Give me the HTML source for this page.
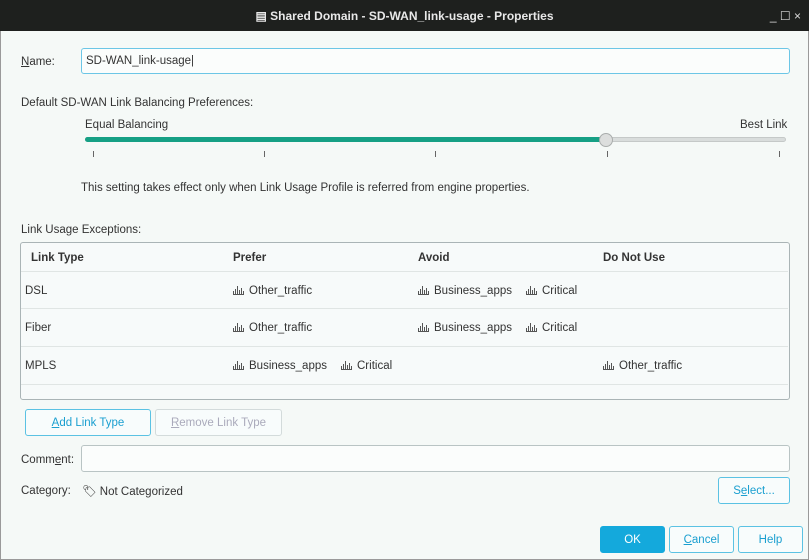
<!DOCTYPE html>
<html><head><style>
*{box-sizing:border-box;margin:0;padding:0}
body{width:809px;height:560px;background:#f5f9f7;font-family:"Liberation Sans",sans-serif;font-size:11.5px;color:#333;position:relative;overflow:hidden}
.a{position:absolute;white-space:nowrap}
.tb{left:0;top:0;width:809px;height:31px;background:#1e201e;color:#e8e8e8;font-weight:bold;font-size:12px;text-align:center;line-height:32px}
.frame{left:0;top:31px;width:809px;height:529px;border:1px solid #9a9a9a;border-top:none}
.inp{background:#fbfdfc;border:1px solid #b9c4c4;border-radius:3px}
.btn{border:1px solid #5bc2e3;border-radius:3px;color:#1a9fd0;text-align:center;background:#f8fcfc}
.hd{font-weight:bold;color:#333}
.sep{left:21px;width:767px;height:1px;background:#e0e5e4}
.ic{display:inline-block;width:11px;height:10px;margin-right:5px;vertical-align:-1px}
.g{display:inline-block;width:14px}
</style></head><body>
<div class="a tb">▤ Shared Domain - SD-WAN_link-usage - Properties</div>
<div class="a" style="right:8px;top:9px;color:#ddd;font-size:12px">_ ☐ ×</div>
<div class="a frame"></div>
<div class="a" style="left:21px;top:56px"><u>N</u>ame:</div>
<div class="a inp" style="left:81px;top:48px;width:709px;height:26px;border-color:#6cc6e6;padding:6px 4px">SD-WAN_link-usage|</div>
<div class="a" style="left:21px;top:97px">Default SD-WAN Link Balancing Preferences:</div>
<div class="a" style="left:85px;top:119px">Equal Balancing</div>
<div class="a" style="left:740px;top:119px">Best Link</div>
<div class="a" style="left:85px;top:137px;width:701px;height:5px;background:#d9dddc;border:1px solid #c5c9c8;border-radius:3px"></div>
<div class="a" style="left:85px;top:137px;width:522px;height:5px;background:#16a085;border-radius:3px"></div>
<div class="a" style="left:599px;top:133px;width:14px;height:14px;border-radius:50%;background:#dcdedd;border:1px solid #a9adac"></div>
<div class="a" style="left:93px;top:151px;width:1px;height:6px;background:#666"></div>
<div class="a" style="left:264px;top:151px;width:1px;height:6px;background:#666"></div>
<div class="a" style="left:435px;top:151px;width:1px;height:6px;background:#666"></div>
<div class="a" style="left:607px;top:151px;width:1px;height:6px;background:#666"></div>
<div class="a" style="left:779px;top:151px;width:1px;height:6px;background:#666"></div>
<div class="a" style="left:81px;top:182px">This setting takes effect only when Link Usage Profile is referred from engine properties.</div>
<div class="a" style="left:21px;top:224px">Link Usage Exceptions:</div>
<div class="a" style="left:20px;top:242px;width:770px;height:158px;border:1px solid #aab4b6;border-radius:3px;background:#f7fafa"></div>
<div class="a hd" style="left:31px;top:252px">Link Type</div>
<div class="a hd" style="left:233px;top:252px">Prefer</div>
<div class="a hd" style="left:418px;top:252px">Avoid</div>
<div class="a hd" style="left:603px;top:252px">Do Not Use</div>
<div class="a sep" style="top:271px"></div>
<div class="a sep" style="top:308px"></div>
<div class="a sep" style="top:346px"></div>
<div class="a sep" style="top:384px"></div>
<svg width="0" height="0" style="position:absolute"><defs><symbol id="b" viewBox="0 0 11 10"><path d="M0.5 10V6M2.5 10V4M4.5 10V1M6.5 10V5M8.5 10V3M10.5 10V6" stroke="#555" stroke-width="1"/><path d="M0 9.5H11" stroke="#555"/></symbol></defs></svg>
<div class="a" style="left:25px;top:285px">DSL</div>
<div class="a" style="left:233px;top:285px"><svg class="ic"><use href="#b"/></svg>Other_traffic</div>
<div class="a" style="left:418px;top:285px"><svg class="ic"><use href="#b"/></svg>Business_apps<span class="g"></span><svg class="ic"><use href="#b"/></svg>Critical</div>
<div class="a" style="left:25px;top:322px">Fiber</div>
<div class="a" style="left:233px;top:322px"><svg class="ic"><use href="#b"/></svg>Other_traffic</div>
<div class="a" style="left:418px;top:322px"><svg class="ic"><use href="#b"/></svg>Business_apps<span class="g"></span><svg class="ic"><use href="#b"/></svg>Critical</div>
<div class="a" style="left:25px;top:360px">MPLS</div>
<div class="a" style="left:233px;top:360px"><svg class="ic"><use href="#b"/></svg>Business_apps<span class="g"></span><svg class="ic"><use href="#b"/></svg>Critical</div>
<div class="a" style="left:603px;top:360px"><svg class="ic"><use href="#b"/></svg>Other_traffic</div>
<div class="a btn" style="left:25px;top:409px;width:126px;height:27px;line-height:27px"><u>A</u>dd Link Type</div>
<div class="a btn" style="left:155px;top:409px;width:127px;height:27px;line-height:27px;border-color:#d3dbdb;color:#aab"><u>R</u>emove Link Type</div>
<div class="a" style="left:21px;top:454px">Comm<u>e</u>nt:</div>
<div class="a inp" style="left:81px;top:445px;width:709px;height:27px"></div>
<div class="a" style="left:21px;top:485px">Category:</div>
<div class="a" style="left:82px;top:484px">🏷 Not Categorized</div>
<div class="a btn" style="left:718px;top:477px;width:72px;height:27px;line-height:27px">S<u>e</u>lect...</div>
<div class="a btn" style="left:600px;top:526px;width:65px;height:27px;line-height:27px;background:#14a9dc;border-color:#14a9dc;color:#fff">OK</div>
<div class="a btn" style="left:669px;top:526px;width:65px;height:27px;line-height:27px"><u>C</u>ancel</div>
<div class="a btn" style="left:738px;top:526px;width:65px;height:27px;line-height:27px">Help</div>
</body></html>
